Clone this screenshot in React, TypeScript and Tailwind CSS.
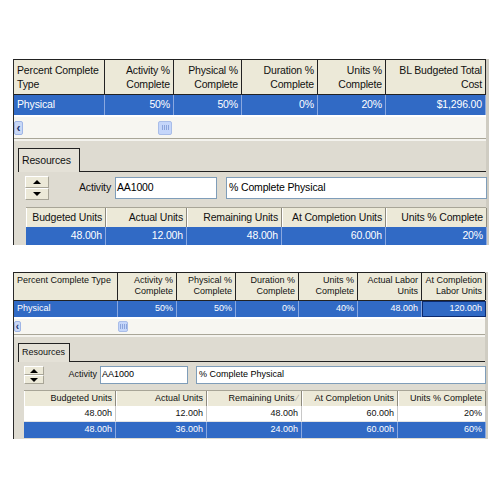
import React from "react";

type Col = { w: string; head: React.ReactNode; val: string; left?: boolean; focus?: boolean };

const mainCols1: Col[] = [
  { w: "w-[91px]", head: <>Percent Complete<br />Type</>, val: "Physical", left: true },
  { w: "w-[69px]", head: <>Activity %<br />Complete</>, val: "50%" },
  { w: "w-[68px]", head: <>Physical %<br />Complete</>, val: "50%" },
  { w: "w-[76px]", head: <>Duration %<br />Complete</>, val: "0%" },
  { w: "w-[68px]", head: <>Units %<br />Complete</>, val: "20%" },
  { w: "w-[100px]", head: <>BL Budgeted Total<br />Cost</>, val: "$1,296.00" },
];

const mainCols2: Col[] = [
  { w: "w-[104px]", head: <>Percent Complete Type</>, val: "Physical", left: true },
  { w: "w-[59px]", head: <>Activity %<br />Complete</>, val: "50%" },
  { w: "w-[59px]", head: <>Physical %<br />Complete</>, val: "50%" },
  { w: "w-[63px]", head: <>Duration %<br />Complete</>, val: "0%" },
  { w: "w-[59px]", head: <>Units %<br />Complete</>, val: "40%" },
  { w: "w-[64px]", head: <>Actual Labor<br />Units</>, val: "48.00h" },
  { w: "w-[64px]", head: <>At Completion<br />Labor Units</>, val: "120.00h", focus: true },
];

const resCols1 = [
  { w: "w-[80px]", head: "Budgeted Units" },
  { w: "w-[81px]", head: "Actual Units" },
  { w: "w-[95px]", head: "Remaining Units" },
  { w: "w-[104px]", head: "At Completion Units" },
  { w: "w-[101px]", head: "Units % Complete" },
];

const resCols2 = [
  { w: "w-[92px]", head: "Budgeted Units" },
  { w: "w-[91px]", head: "Actual Units" },
  { w: "w-[95px]", head: "Remaining Units", sort: true },
  { w: "w-[96px]", head: "At Completion Units" },
  { w: "w-[88px]", head: "Units % Complete" },
];

const resRows1 = [{ sel: true, vals: ["48.00h", "12.00h", "48.00h", "60.00h", "20%"] }];
const resRows2 = [
  { sel: false, vals: ["48.00h", "12.00h", "48.00h", "60.00h", "20%"] },
  { sel: true, vals: ["48.00h", "36.00h", "24.00h", "60.00h", "60%"] },
];

function ScrollBar({ big }: { big: boolean }) {
  return (
    <div className={`flex items-center bg-[#f7f6f1] border-t-2 border-white ${big ? "h-[23px]" : "h-[17px]"}`}>
      <div
        className={`flex-none flex items-center justify-center bg-[#c9d8f6] border border-[#9fb5e6] rounded-[2px] text-[#22336b] font-bold ${
          big ? "w-[9px] h-[14px] text-[12px]" : "w-[7px] h-[11px] text-[10px]"
        }`}
      >
        ‹
      </div>
      <div
        className={`flex-none flex items-center justify-center gap-[1px] bg-[#c5d6fa] border border-[#a9bde8] rounded-[2px] ${
          big ? "w-[14px] h-[14px] ml-[135px]" : "w-[10px] h-[11px] ml-[97px]"
        }`}
      >
        <div className="w-px h-[5px] bg-[#8ca5dc]" />
        <div className="w-px h-[5px] bg-[#8ca5dc]" />
        <div className="w-px h-[5px] bg-[#8ca5dc]" />
        <div className="w-px h-[5px] bg-[#8ca5dc]" />
      </div>
    </div>
  );
}

function Spinner({ big }: { big: boolean }) {
  const btn = `flex items-center justify-center bg-[#ece9d8] border border-t-white border-l-white border-r-[#a8a597] border-b-[#a8a597] ${
    big ? "h-[12px]" : "h-[9px]"
  }`;
  return (
    <div className={`flex-none flex flex-col ${big ? "w-[24px]" : "w-[20px]"}`}>
      <div className={btn}>
        <div className="w-0 h-0 border-l-[4px] border-r-[4px] border-b-[4px] border-l-transparent border-r-transparent border-b-black" />
      </div>
      <div className={btn}>
        <div className="w-0 h-0 border-l-[4px] border-r-[4px] border-t-[4px] border-l-transparent border-r-transparent border-t-black" />
      </div>
    </div>
  );
}

function Block({
  big,
  cols,
  resCols,
  resRows,
}: {
  big: boolean;
  cols: Col[];
  resCols: { w: string; head: string; sort?: boolean }[];
  resRows: { sel: boolean; vals: string[] }[];
}) {
  return (
    <div
      className={`flex flex-col whitespace-nowrap border-l border-[#2a2a2a] border-r-[3px] border-r-[#cfccc2] ${
        big ? "w-[476px] text-[10.5px] tracking-[-0.15px]" : "w-[475px] text-[9px]"
      }`}
    >
      {/* grid header */}
      <div className={`flex border-t border-b border-[#222] bg-[#ece9d8] ${big ? "h-[36px]" : "h-[29px]"}`}>
        {cols.map((c, i) => (
          <div
            key={i}
            className={`flex-none ${c.w} overflow-hidden border-r border-[#222] px-[3px] ${
              big ? "pt-[3px] leading-[14px]" : "pt-[2px] leading-[11px]"
            } ${c.left ? "text-left" : "text-right"} text-[#111]`}
          >
            {c.head}
          </div>
        ))}
      </div>
      {/* selected data row */}
      <div className={`flex bg-[#316ac5] text-white ${big ? "h-[20px]" : "h-[16px]"}`}>
        {cols.map((c, i) => (
          <div
            key={i}
            className={`flex-none ${c.w} flex items-center px-[3px] border-r ${
              c.focus ? "border border-[#0c2a6e]" : "border-[#8aa8e0]"
            } ${c.left ? "justify-start" : "justify-end"}`}
          >
            {c.val}
          </div>
        ))}
      </div>
      <ScrollBar big={big} />

      {/* lower panel */}
      <div className="bg-[#dedbd1] border-t border-[#a9a698] shadow-[inset_0_2px_0_#f4f3ee]">
        <div className={`flex items-end ${big ? "pt-[9px] pl-[4px]" : "pt-[8px] pl-[4px]"}`}>
          <div
            className={`flex-none flex items-center border border-b-0 border-[#222] bg-[#e4e1d7] px-[3px] text-[#111] ${
              big ? "w-[62px] h-[24px]" : "w-[52px] h-[19px]"
            }`}
          >
            Resources
          </div>
          <div className="flex-1 border-b border-[#222]" />
        </div>

        <div className={`flex items-center ${big ? "mt-[4px] pl-[11px] gap-[4px]" : "mt-[4px] pl-[10px] gap-[3px]"}`}>
          <Spinner big={big} />
          <div className={`flex-none text-right text-[#111] ${big ? "w-[58px]" : "w-[50px]"}`}>Activity</div>
          <div
            className={`flex-none flex items-center bg-white border border-[#7f9db9] px-[1px] ${
              big ? "w-[102px] h-[22px]" : "w-[88px] h-[18px]"
            }`}
          >
            AA1000
          </div>
          <div
            className={`flex-none flex items-center bg-white border border-[#7f9db9] px-[2px] ${
              big ? "w-[261px] h-[22px] ml-[5px]" : "w-[290px] h-[18px] ml-[5px]"
            }`}
          >
            % Complete Physical
          </div>
        </div>

        <div className={`flex flex-col ${big ? "mt-[7px] ml-[12px]" : "mt-[6px] ml-[10px]"}`}>
          <div className={`flex bg-[#ece9d8] border-t border-[#a8a597] ${big ? "h-[20px]" : "h-[16px]"}`}>
            {resCols.map((c, i) => (
              <div
                key={i}
                className={`flex-none ${c.w} overflow-hidden flex items-center justify-end gap-[2px] px-[3px] border-r border-r-[#8d8a7e] border-l border-l-white text-[#111]`}
              >
                {c.head}
                {c.sort && <span className="text-[#a8a597]">∕</span>}
              </div>
            ))}
          </div>
          {resRows.map((r, ri) => (
            <div
              key={ri}
              className={`flex ${big ? "h-[18px]" : "h-[16px]"} ${r.sel ? "bg-[#316ac5] text-white" : "bg-white text-[#111] border-b border-[#e4e4e4]"}`}
            >
              {r.vals.map((v, i) => (
                <div
                  key={i}
                  className={`flex-none ${resCols[i].w} flex items-center justify-end px-[3px] border-r ${
                    r.sel ? "border-[#8aa8e0]" : "border-[#c8c8c8]"
                  }`}
                >
                  {v}
                </div>
              ))}
            </div>
          ))}
          {!big && <div className="h-px" />}
        </div>
      </div>
    </div>
  );
}

export default function App() {
  return (
    <div className="w-[500px] h-[500px] bg-white font-['Liberation_Sans',Arial,sans-serif] overflow-hidden">
      <div className="pt-[59px] pl-[13px]">
        <Block big cols={mainCols1} resCols={resCols1} resRows={resRows1} />
      </div>
      <div className="pt-[27px] pl-[13px]">
        <Block big={false} cols={mainCols2} resCols={resCols2} resRows={resRows2} />
      </div>
    </div>
  );
}
